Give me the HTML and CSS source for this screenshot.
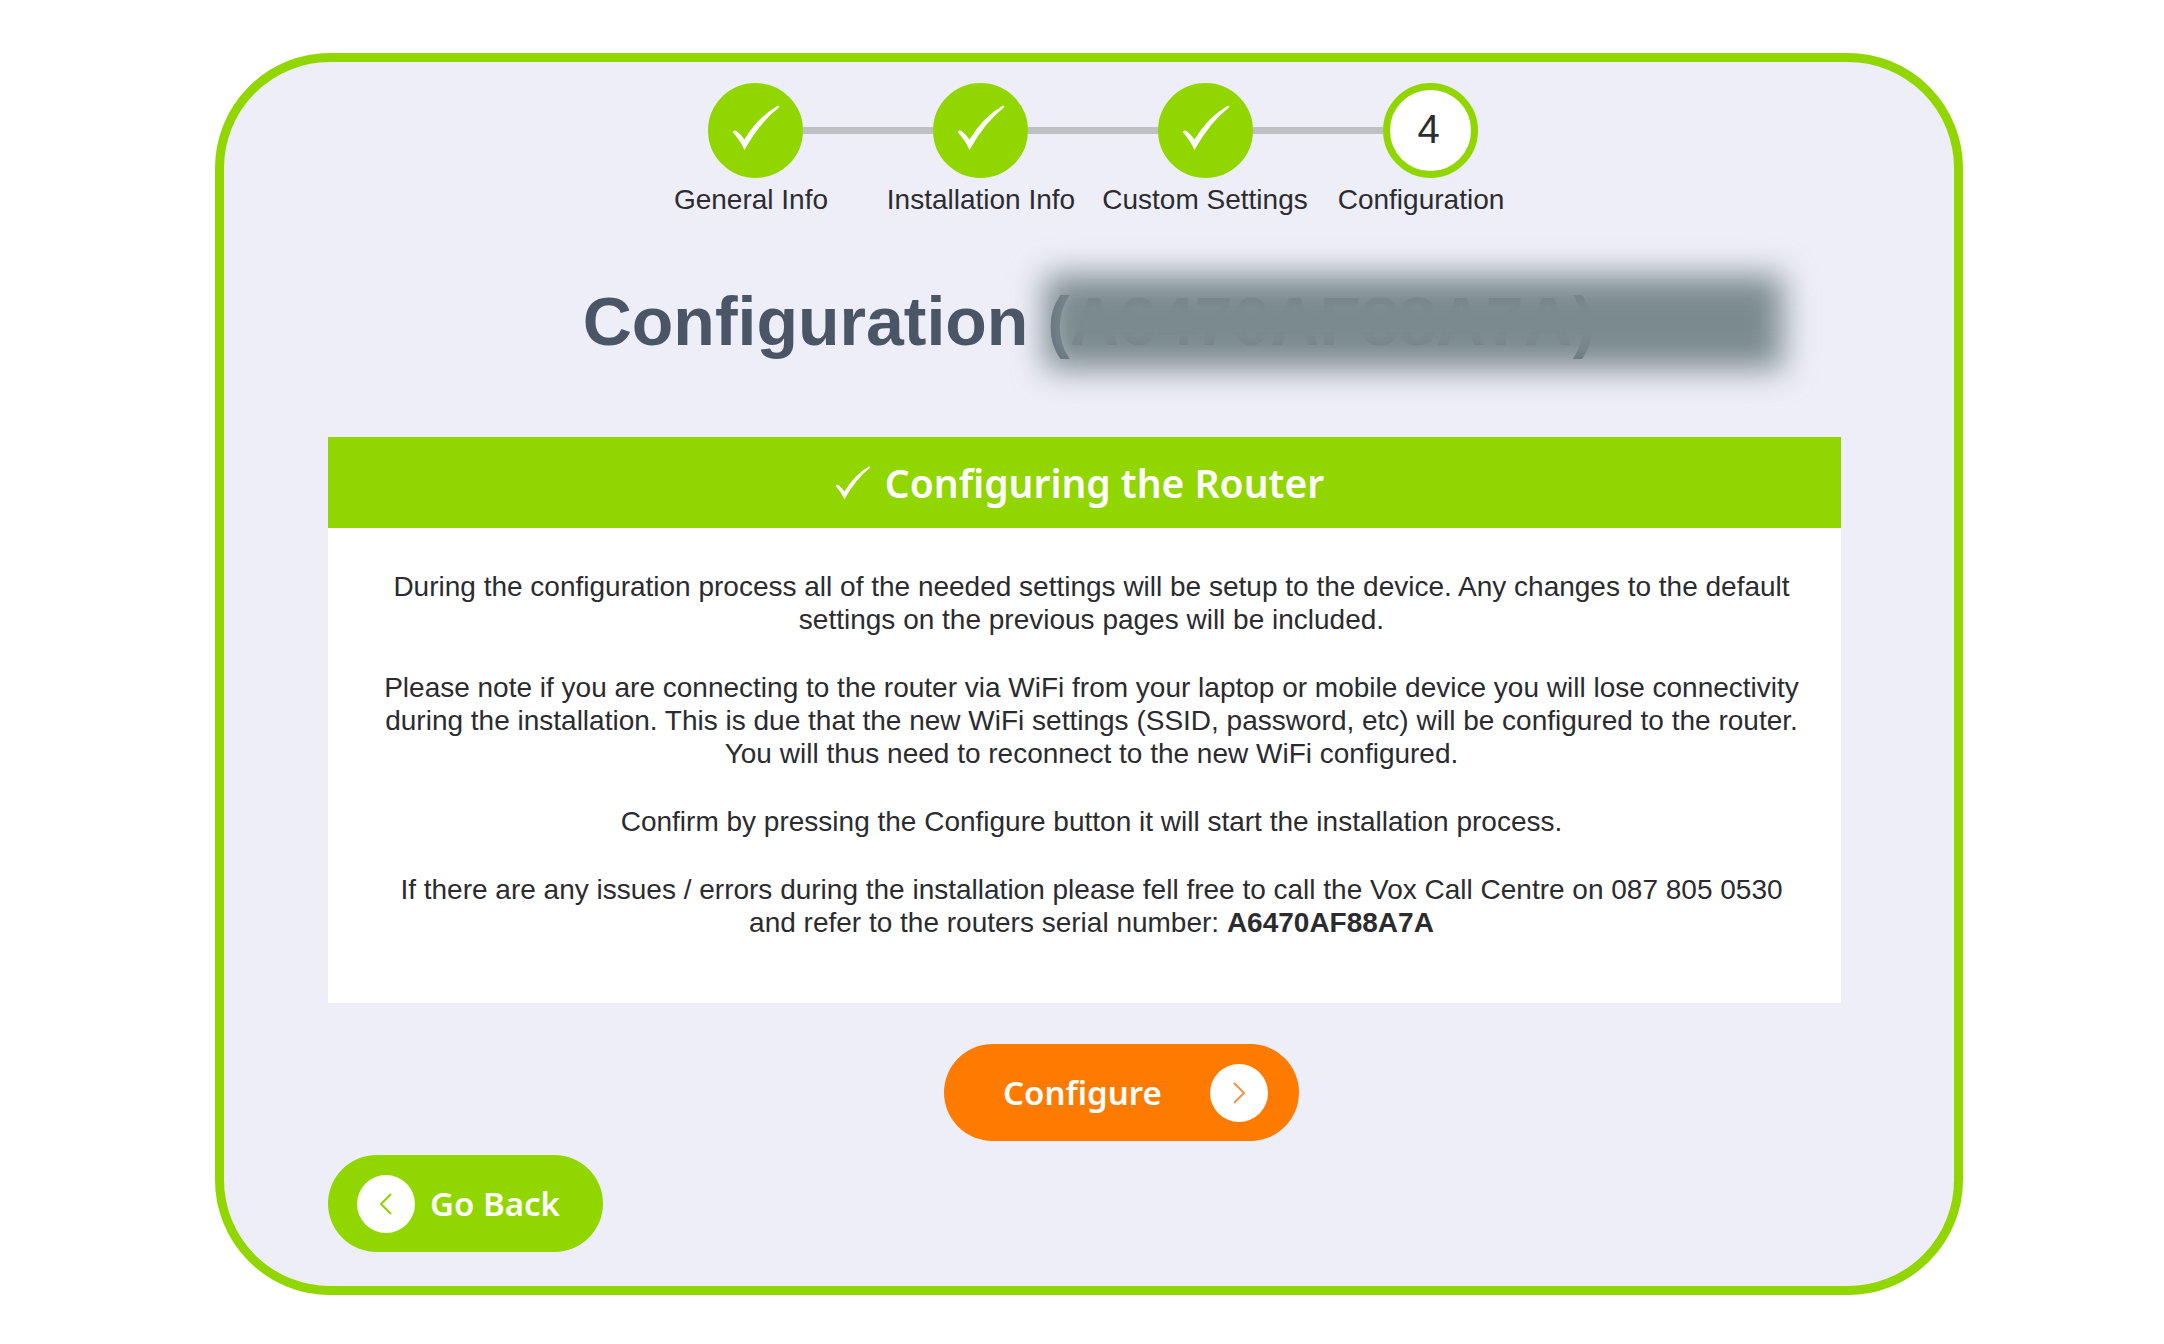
FILE: index.html
```html
<!DOCTYPE html>
<html lang="en">
<head>
    <meta charset="UTF-8">
    <meta name="viewport" content="width=device-width, initial-scale=1.0">
    <title>Router Configuration</title>
    <link rel="stylesheet" href="styles.css">
</head>
<body>
    <svg class="symbols" aria-hidden="true">
        <symbol id="check" viewBox="0 0 48 46">
            <path d="M0.5 27 Q2 24.5 4.5 26 Q8.5 29 12.5 34.5 Q26 12 46 0.5 L47.5 2 Q28 17 12.5 45 Q8 35 0.5 27 Z" fill="currentColor"/>
        </symbol>
    </svg>
    <main class="card">
        <div class="stepper">
            <div class="circles">
                <span class="circle done"><svg><use href="#check"/></svg></span>
                <span class="line"></span>
                <span class="circle done"><svg><use href="#check"/></svg></span>
                <span class="line"></span>
                <span class="circle done"><svg><use href="#check"/></svg></span>
                <span class="line"></span>
                <span class="circle current">4</span>
            </div>
            <ol class="labels">
                <li>General Info</li>
                <li>Installation Info</li>
                <li>Custom Settings</li>
                <li>Configuration</li>
            </ol>
        </div>

        <h1>Configuration <span class="serial">(A6470AF88A7A)</span></h1>

        <section class="panel">
            <h2><svg><use href="#check"/></svg>Configuring the Router</h2>
            <div class="panel-body">
                <p>During the configuration process all of the needed settings will be setup to the device. Any changes to the default settings on the previous pages will be included.</p>
                <p>Please note if you are connecting to the router via WiFi from your laptop or mobile device you will lose connectivity during the installation. This is due that the new WiFi settings (SSID, password, etc) will be configured to the router. You will thus need to reconnect to the new WiFi configured.</p>
                <p>Confirm by pressing the Configure button it will start the installation process.</p>
                <p>If there are any issues / errors during the installation please fell free to call the Vox Call Centre on 087 805 0530 and refer to the routers serial number: <b>A6470AF88A7A</b></p>
            </div>
        </section>

        <div class="actions">
            <button type="button" class="btn configure">
                Configure
                <span class="arrow"><svg viewBox="0 0 14 22"><path d="M2 1 L12 11 L2 21"/></svg></span>
            </button>
        </div>
        <div class="back">
            <button type="button" class="btn go-back">
                <span class="arrow"><svg viewBox="0 0 14 22"><path d="M12 1 L2 11 L12 21"/></svg></span>
                Go Back
            </button>
        </div>
    </main>
</body>
</html>
```
FILE: styles.css
```css
* {
    box-sizing: border-box;
}
body {
    font-family: "Liberation Sans", Arial, sans-serif;
    font-size: 28px;
    line-height: 33px;
    margin: 0;
    padding: 53px 201px 48px 215px;
    background-color: #fff;
    color: #2b2b30;
}
h1, h2, p, ol {
    margin: 0;
    padding: 0;
}
.symbols {
    display: none;
}
.card {
    padding: 21px 0 34px;
    background-color: #eeeef8;
    border: 9px solid #92d600;
    border-radius: 115px;
}

/* steps */
.stepper {
    display: flex;
    flex-direction: column;
    align-items: center;
    gap: 5px;
}
.circles {
    display: flex;
    align-items: center;
    padding-left: 8px;
}
.circle {
    display: flex;
    justify-content: center;
    align-items: center;
    width: 95px;
    height: 95px;
    border: 7px solid #92d600;
    border-radius: 50%;
}
.circle svg {
    width: 48px;
    height: 46px;
    margin-bottom: 6px;
}
.done {
    background-color: #92d600;
    color: #fff;
}
.current {
    background-color: #fff;
    padding: 0 4px 2px 0;
    font-size: 40px;
}
.line {
    width: 130px;
    height: 7px;
    background-color: #bfc0c2;
}
.labels {
    display: grid;
    grid-template-columns: 228px 232px 216px 216px;
    padding-right: 12px;
    list-style: none;
    text-align: center;
}

h1 {
    margin-top: 65px;
    font-size: 68px;
    line-height: 80px;
    text-align: center;
    color: #4a5566;
}
.serial {
    position: relative;
}
/* soft cover over the serial number */
.serial::after {
    content: "";
    position: absolute;
    top: -8px;
    left: -2px;
    right: -188px;
    height: 94px;
    background-color: #7b8a8f;
    filter: blur(16px);
}

/* panel */
.panel {
    margin: 76px 113px 0 104px;
    background-color: #fff;
}
.panel h2 {
    display: flex;
    justify-content: center;
    align-items: center;
    gap: 14px;
    height: 91px;
    padding-right: 10px;
    background-color: #92d600;
    color: #fff;
    font-family: "Noto Sans", "Open Sans", sans-serif;
    font-size: 39px;
    font-weight: 600;
}
.panel h2 svg {
    width: 36px;
    height: 34px;
}
.panel-body {
    display: flex;
    flex-direction: column;
    gap: 35px;
    padding: 42px 38px 64px 52px;
    text-align: center;
}

/* buttons */
.actions {
    display: flex;
    justify-content: center;
    margin-top: 41px;
    padding-left: 65px;
}
.back {
    margin: 14px 104px 0;
}
.btn {
    display: flex;
    align-items: center;
    height: 97px;
    border: none;
    border-radius: 49px;
    color: #fff;
    font-family: "Noto Sans", "Open Sans", sans-serif;
    font-size: 33px;
    font-weight: 600;
    cursor: pointer;
}
.configure {
    justify-content: space-between;
    width: 355px;
    padding: 0 31px 0 59px;
    background-color: #ff7b00;
}
.go-back {
    gap: 15px;
    width: 275px;
    padding: 0 29px;
    background-color: #92d600;
}
.arrow {
    display: flex;
    justify-content: center;
    align-items: center;
    width: 58px;
    height: 58px;
    border-radius: 50%;
    background-color: #fff;
}
.arrow svg {
    width: 14px;
    height: 22px;
    fill: none;
    stroke: #f5924a;
    stroke-width: 2px;
}
.go-back .arrow svg {
    stroke: #92d600;
}
```
